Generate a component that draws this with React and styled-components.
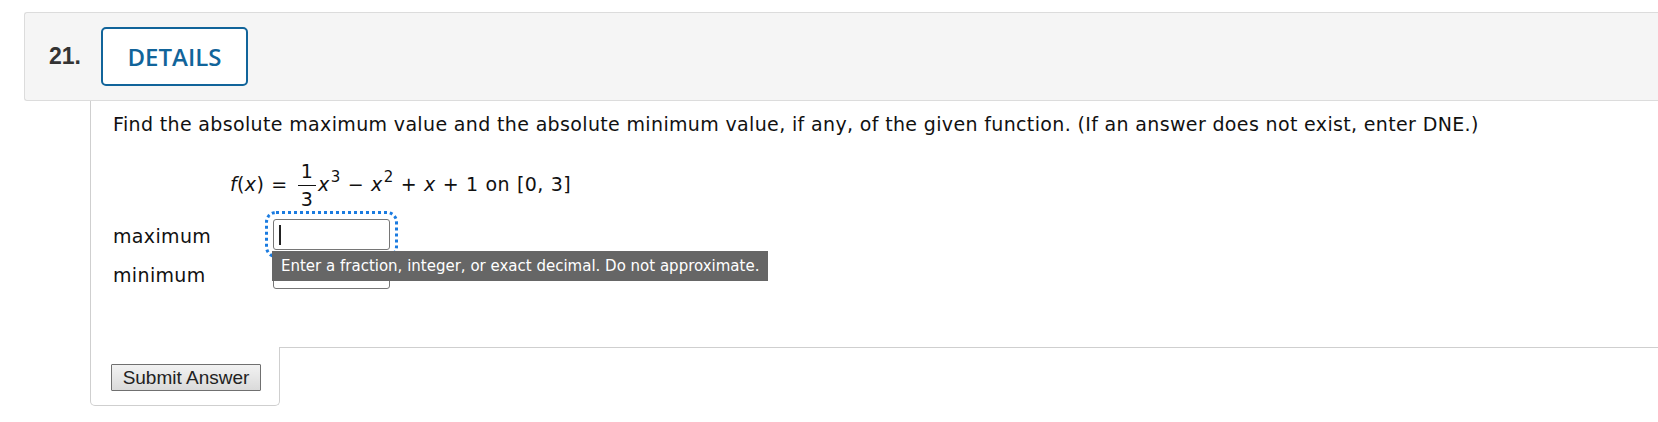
import React from 'react';
import styled, { createGlobalStyle } from 'styled-components';

const Global = createGlobalStyle`
  body {
    margin: 0;
    background: #fff;
    font-family: "DejaVu Sans", Verdana, sans-serif;
    color: #111;
  }
`;

const Page = styled.div`
  padding: 12px 0 0 24px;
`;

const Header = styled.div`
  display: flex;
  align-items: center;
  height: 87px;
  background: #f5f5f5;
  border: 1px solid #dcdcdc;
  border-right: none;
  border-radius: 3px 0 0 3px;
  padding-left: 24px;
`;

const Number = styled.span`
  font-family: "Liberation Sans", Arial, sans-serif;
  font-weight: 700;
  font-size: 23px;
  color: #333;
  margin-right: 20px;
`;

const DetailsButton = styled.button`
  width: 147px;
  height: 59px;
  border: 2px solid #11649a;
  border-radius: 5px;
  background: #fff;
  color: #11649a;
  font-family: "Open Sans", sans-serif;
  font-weight: 600;
  font-size: 24px;
  padding: 0;
`;

const Body = styled.div`
  margin-left: 66px;
`;

const Question = styled.div`
  border-left: 1px solid #cfcfcf;
  padding: 11px 0 58px 22px;
  font-size: 19px;
  letter-spacing: 0.35px;
`;

const Prompt = styled.p`
  margin: 0;
  line-height: 24px;
`;

const Formula = styled.div`
  margin: 24px 0 0 117px;
  line-height: 24px;
  word-spacing: 0.7px;
  white-space: pre;
`;

const Var = styled.i`
  font-style: italic;
`;

const Sup = styled.sup`
  font-size: 15px;
  vertical-align: 9px;
  line-height: 0;
  margin-left: 1px;
`;

const Fraction = styled.span`
  display: inline-flex;
  flex-direction: column;
  align-items: center;
  vertical-align: middle;
  line-height: 22px;
  margin: 0 2px 0 3px;
  span:first-child {
    border-bottom: 1px solid #111;
    padding: 0 3px 3px;
  }
  span:last-child {
    padding-top: 2px;
  }
`;

const Rows = styled.div`
  display: flex;
  flex-direction: column;
  gap: 8px;
  margin-top: 9px;
`;

const Row = styled.div`
  display: flex;
  align-items: center;
`;

const Label = styled.label`
  width: 160px;
  padding-top: 2px;
`;

const Field = styled.div`
  position: relative;
  width: 117px;
  height: 31px;
  box-sizing: border-box;
  border: 1px solid #767676;
  border-radius: 3px;
  outline: ${p => (p.focused ? '3px dotted #1a7be0' : 'none')};
  outline-offset: 5px;
`;

const Input = styled.input`
  width: 100%;
  height: 100%;
  box-sizing: border-box;
  border: none;
  background: transparent;
  outline: none;
  font: inherit;
  padding: 0 6px;
`;

const Caret = styled.span`
  position: absolute;
  left: 5px;
  top: 5px;
  width: 2px;
  height: 20px;
  background: #222;
`;

const Tooltip = styled.div`
  position: absolute;
  left: -2px;
  top: 31px;
  z-index: 2;
  height: 30px;
  padding: 0 9px;
  display: flex;
  align-items: center;
  background: #666;
  color: #fff;
  font-size: 15px;
  letter-spacing: 0;
  white-space: nowrap;
`;

const Footer = styled.div`
  display: flex;
`;

const SubmitBox = styled.div`
  width: 190px;
  height: 59px;
  border: 1px solid #cfcfcf;
  border-top: none;
  border-radius: 0 0 5px 5px;
  padding: 17px 0 0 20px;
  box-sizing: border-box;
`;

const Filler = styled.div`
  flex: 1;
  border-top: 1px solid #cfcfcf;
`;

const SubmitButton = styled.button`
  width: 150px;
  height: 27px;
  border: 1px solid #707070;
  border-radius: 1px;
  background: linear-gradient(#f2f2f2, #dadada);
  color: #222;
  font-family: "Liberation Sans", Arial, sans-serif;
  font-size: 19px;
  padding: 0;
`;

const answers = [
  { label: 'maximum', focused: true },
  { label: 'minimum', focused: false },
];

export default function App() {
  return (
    <Page>
      <Global />
      <Header>
        <Number>21.</Number>
        <DetailsButton>DETAILS</DetailsButton>
      </Header>
      <Body>
        <Question>
          <Prompt>
            Find the absolute maximum value and the absolute minimum value, if any, of the given function. (If an answer does not exist, enter DNE.)
          </Prompt>
          <Formula>
            <Var>f</Var>(<Var>x</Var>) = <Fraction><span>1</span><span>3</span></Fraction><Var>x</Var><Sup>3</Sup> − <Var>x</Var><Sup>2</Sup> + <Var>x</Var> + 1 on [0, 3]
          </Formula>
          <Rows>
            {answers.map(a => (
              <Row key={a.label}>
                <Label>{a.label}</Label>
                <Field focused={a.focused}>
                  <Input type="text" aria-label={a.label} />
                  {a.focused && <Caret />}
                  {a.focused && (
                    <Tooltip>Enter a fraction, integer, or exact decimal. Do not approximate.</Tooltip>
                  )}
                </Field>
              </Row>
            ))}
          </Rows>
        </Question>
        <Footer>
          <SubmitBox>
            <SubmitButton>Submit Answer</SubmitButton>
          </SubmitBox>
          <Filler />
        </Footer>
      </Body>
    </Page>
  );
}
